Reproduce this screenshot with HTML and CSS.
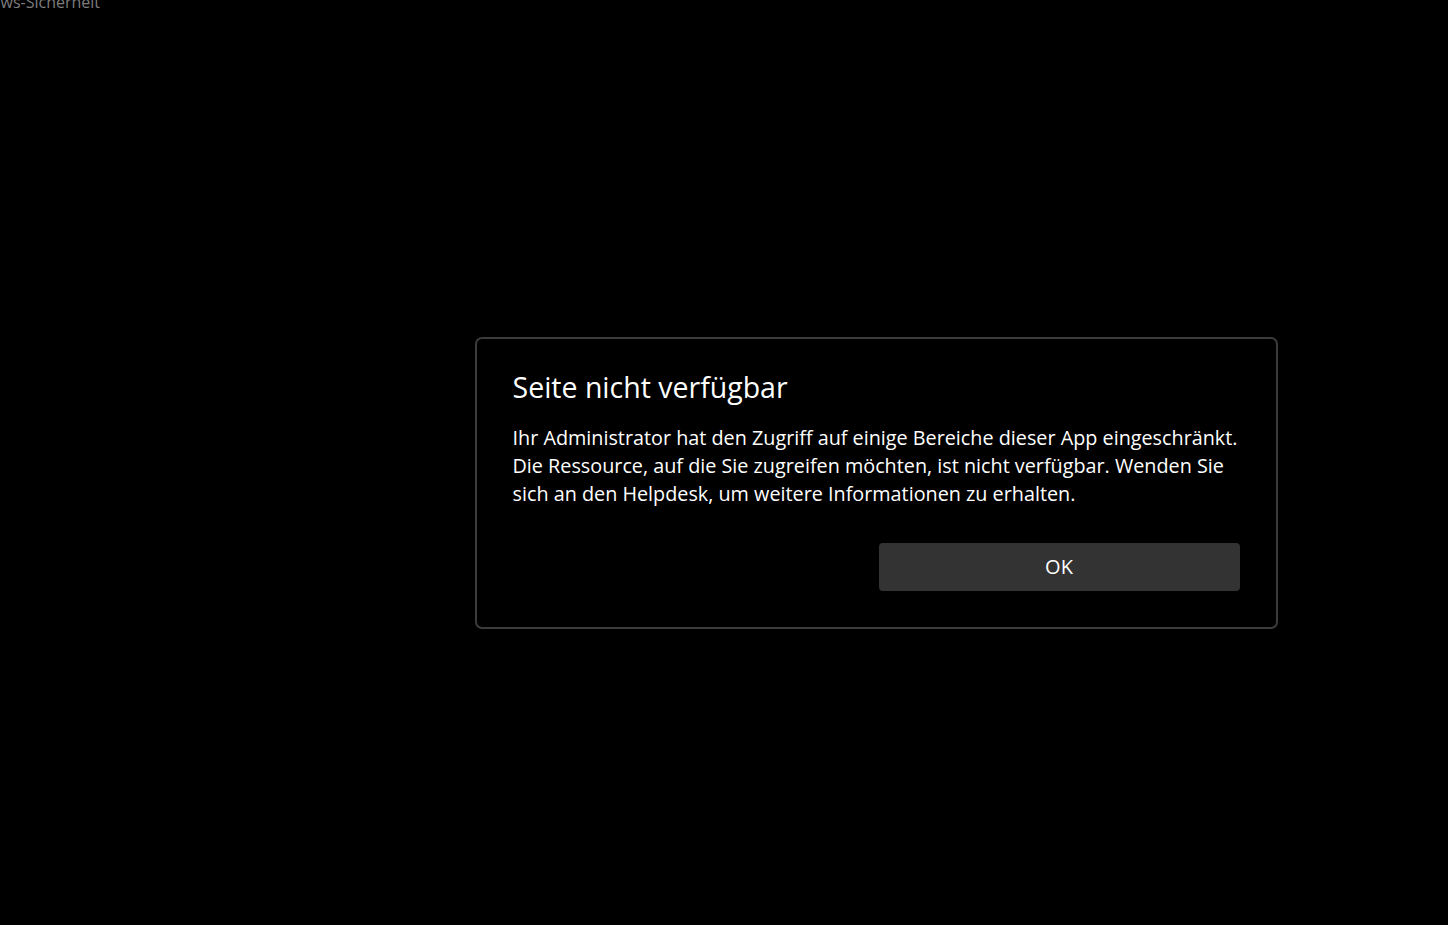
FILE: index.html
```html
<!DOCTYPE html>
<html lang="de">
<head>
    <meta charset="UTF-8">
    <title>Windows-Sicherheit</title>
    <link rel="stylesheet" href="styles.css">
</head>
<body>
    <header class="title_bar">
        <div class="title_clip">
            <span class="app_title">Windows-Sicherheit</span>
        </div>
    </header>

    <main class="app_body">
        <div class="side_space"></div>
        <div class="content">
            <div class="dialog">
                <h1 class="dialog_title">Seite nicht verfügbar</h1>
                <p class="dialog_text">Ihr Administrator hat den Zugriff auf einige Bereiche dieser App eingeschränkt. Die Ressource, auf die Sie zugreifen möchten, ist nicht verfügbar. Wenden Sie sich an den Helpdesk, um weitere Informationen zu erhalten.</p>
                <div class="dialog_buttons">
                    <button type="button" class="ok_button">OK</button>
                </div>
            </div>
        </div>
    </main>
</body>
</html>
```
FILE: styles.css
```css
*{
    font-family: "Open Sans", "Noto Sans", sans-serif;
    box-sizing: border-box;
}
html, body{
    margin: 0px;
    padding: 0px;
    height: 100%;
    background-color: black;
    color: white;
    overflow: hidden;
}
body{
    display: flex;
    flex-direction: column;
}

/* Title bar */
.title_bar{
    height: 40px;
    flex-shrink: 0;
    overflow: hidden;
}
.title_clip{
    width: 100px;
    display: flex;
    justify-content: flex-end;
    margin-top: -6px;
}
.app_title{
    flex-shrink: 0;
    font-size: 16px;
    line-height: 16px;
    color: #7d7d7d;
    white-space: nowrap;
}

/* Body */
.app_body{
    flex: 1;
    display: flex;
}
.side_space{
    width: 304px;
    flex-shrink: 0;
}
.content{
    flex: 1;
    display: flex;
    justify-content: center;
    align-items: center;
}

/* Dialog */
.dialog{
    width: 803px;
    border: 2px solid #3b3b3b;
    border-radius: 7px;
    padding: 28px 36px 36px 36px;
    background-color: black;
}
.dialog_title{
    margin: 0px;
    font-size: 28.5px;
    font-weight: normal;
    line-height: 40px;
}
.dialog_text{
    margin: 17px 0px 0px 0px;
    font-size: 19.8px;
    line-height: 28px;
}
.dialog_buttons{
    display: flex;
    justify-content: flex-end;
    margin-top: 35px;
}
.ok_button{
    width: 361px;
    height: 48px;
    border: none;
    border-radius: 4px;
    background-color: #333333;
    color: white;
    font-size: 20px;
    cursor: pointer;
}
```
